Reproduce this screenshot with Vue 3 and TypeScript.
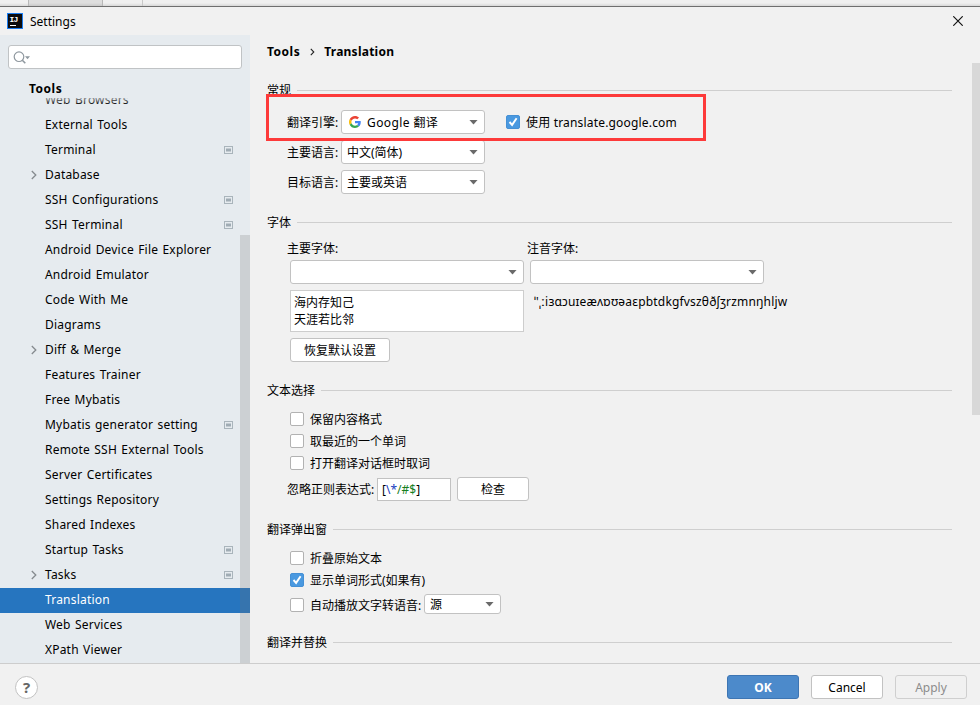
<script setup lang="ts">
interface TreeItem {
  label: string
  expandable?: boolean
  project?: boolean
  selected?: boolean
}

const items: TreeItem[] = [
  { label: 'Web Browsers' },
  { label: 'External Tools' },
  { label: 'Terminal', project: true },
  { label: 'Database', expandable: true },
  { label: 'SSH Configurations', project: true },
  { label: 'SSH Terminal', project: true },
  { label: 'Android Device File Explorer' },
  { label: 'Android Emulator' },
  { label: 'Code With Me' },
  { label: 'Diagrams' },
  { label: 'Diff & Merge', expandable: true },
  { label: 'Features Trainer' },
  { label: 'Free Mybatis' },
  { label: 'Mybatis generator setting', project: true },
  { label: 'Remote SSH External Tools' },
  { label: 'Server Certificates' },
  { label: 'Settings Repository' },
  { label: 'Shared Indexes' },
  { label: 'Startup Tasks', project: true },
  { label: 'Tasks', expandable: true, project: true },
  { label: 'Translation', selected: true },
  { label: 'Web Services' },
  { label: 'XPath Viewer' },
]

const selectionOptions: string[] = ['保留内容格式', '取最近的一个单词', '打开翻译对话框时取词']
</script>

<template>
  <div class="window">
    <div class="backdrop"><span class="tab"></span><span class="tab-gap"></span></div>
    <header class="titlebar">
      <svg class="app-icon" width="16" height="16" viewBox="0 0 16 16">
        <rect width="16" height="16" fill="#1a7cf0" />
        <rect x="1" y="1" width="14" height="14" fill="#0b0b0d" />
        <text x="2.6" y="9" class="app-mark" textLength="8.6">IJ</text>
        <path d="M3 12.500h6" stroke="#fff" stroke-width="1" />
      </svg>
      <span class="title">Settings</span>
      <svg class="close" width="10" height="10" viewBox="0 0 10 10">
        <path d="M.3 .3l9.400 9.400M9.700 .3L.3 9.700" stroke="#111" stroke-width="1.150" />
      </svg>
    </header>

    <div class="body">
      <aside class="sidebar">
        <div class="search">
          <svg width="18" height="14" viewBox="0 0 18 14">
            <circle cx="6" cy="5.700" r="4.800" fill="none" stroke="#8f989f" stroke-width="1.200" />
            <path d="M9.300 9.200l3 3" stroke="#8f989f" stroke-width="1.600" />
            <path d="M12 5.200h5l-2.500 3z" fill="#8f989f" />
          </svg>
        </div>
        <div class="group">Tools</div>
        <div class="tree">
          <div v-for="item in items" :key="item.label" class="node" :class="{ selected: item.selected }">
            <span class="arrow">
              <svg v-if="item.expandable" width="6" height="10" viewBox="0 0 6 10">
                <path d="M.8 1l4 4-4 4" fill="none" stroke="#858a8e" stroke-width="1.300" />
              </svg>
            </span>
            <span class="node-label">{{ item.label }}</span>
            <svg v-if="item.project" class="project" width="9" height="8" viewBox="0 0 9 8">
              <rect x=".5" y=".5" width="8" height="7" fill="none" stroke="#a9b4bb" />
              <rect x="2" y="2.500" width="5" height="3" fill="#a0acb4" />
            </svg>
          </div>
          <div class="tree-fade"></div>
          <div class="tree-scroll"></div>
        </div>
      </aside>

      <main class="content">
        <div class="crumbs">
          <span>Tools</span>
          <svg width="5" height="8" viewBox="0 0 5 8"><path d="M.8 .8L3.800 4 .8 7.200" fill="none" stroke="#222" stroke-width="1.100" /></svg>
          <span class="current">Translation</span>
        </div>

        <section class="general">
          <h2><span>常规</span></h2>
          <div class="field">
            <label>翻译引擎:</label>
            <div class="combo">
              <svg class="google" width="12" height="12" viewBox="0 0 48 48">
                <path fill="#ea4335" d="M24 9.500c3.500 0 6.700 1.200 9.200 3.600l6.900-6.900C35.900 2.400 30.500 0 24 0 14.600 0 6.500 5.400 2.600 13.200l8 6.200C12.400 13.700 17.700 9.500 24 9.500z" />
                <path fill="#4285f4" d="M47 24.600c0-1.600-.2-3.100-.4-4.600H24v9h12.900c-.6 3-2.200 5.500-4.700 7.200l7.700 6C44.400 38 47 31.900 47 24.600z" />
                <path fill="#fbbc05" d="M10.500 28.600c-.5-1.500-.8-3-.8-4.600s.3-3.100.8-4.600l-8-6.200C.9 16.500 0 20.100 0 24s.9 7.500 2.600 10.800z" />
                <path fill="#34a853" d="M24 48c6.500 0 11.900-2.100 15.900-5.800l-7.700-6c-2.200 1.500-4.900 2.300-8.200 2.300-6.300 0-11.600-4.200-13.500-9.900l-7.900 6.200C6.500 42.600 14.600 48 24 48z" />
              </svg>
              <span class="engine">Google 翻译</span><i class="caret"></i>
            </div>
            <div class="check engine-check">
              <span class="box on"><svg width="12" height="12" viewBox="0 0 12 12"><path d="M2.500 6l2.600 2.900 4.500-6.700" /></svg></span>
              <span class="host">使用 translate.google.com</span>
            </div>
          </div>
          <div class="field"><label>主要语言:</label><div class="combo"><span>中文(简体)</span><i class="caret"></i></div></div>
          <div class="field"><label>目标语言:</label><div class="combo"><span>主要或英语</span><i class="caret"></i></div></div>
          <div class="highlight"></div>
        </section>

        <section>
          <h2><span>字体</span></h2>
          <div class="fonts">
            <div class="font-col">
              <div class="font-label">主要字体:</div>
              <div class="combo wide"><i class="caret"></i></div>
              <div class="preview">海内存知己<br />天涯若比邻</div>
              <button class="btn reset">恢复默认设置</button>
            </div>
            <div class="font-col">
              <div class="font-label">注音字体:</div>
              <div class="combo wide"><i class="caret"></i></div>
              <div class="phonetic">ˈ'ˌːiɜɑɔuɪeæʌɒʊəaɛpbtdkgfvszθðʃʒrzmnŋhljw</div>
            </div>
          </div>
        </section>

        <section>
          <h2><span>文本选择</span></h2>
          <div class="checks">
            <div v-for="option in selectionOptions" :key="option" class="check">
              <span class="box"></span><span class="caption">{{ option }}</span>
            </div>
          </div>
          <div class="regex">
            <label>忽略正则表达式:</label>
            <div class="input">[<span class="esc">\*</span><span class="lit">/#$</span>]</div>
            <button class="btn verify">检查</button>
          </div>
        </section>

        <section>
          <h2><span>翻译弹出窗</span></h2>
          <div class="checks">
            <div class="check"><span class="box"></span><span class="caption">折叠原始文本</span></div>
            <div class="check">
              <span class="box on"><svg width="12" height="12" viewBox="0 0 12 12"><path d="M2.500 6l2.600 2.900 4.500-6.700" /></svg></span>
              <span class="caption">显示单词形式(如果有)</span>
            </div>
          </div>
          <div class="tts">
            <div class="check"><span class="box"></span><span>自动播放文字转语音:</span></div>
            <div class="combo small"><span>源</span><i class="caret"></i></div>
          </div>
        </section>

        <section>
          <h2><span>翻译并替换</span></h2>
        </section>
        <div class="page-scroll"></div>
      </main>
    </div>

    <footer>
      <div class="help">?</div>
      <div class="actions">
        <button class="btn primary">OK</button>
        <button class="btn">Cancel</button>
        <button class="btn disabled">Apply</button>
      </div>
    </footer>
  </div>
</template>

<style>
body {
  margin: 0;
  overflow: hidden;
}
</style>

<style scoped>
* {
  box-sizing: border-box;
}
.window {
  display: flex;
  flex-direction: column;
  width: 980px;
  height: 705px;
  background: #f1f1f1;
  color: #000;
  font: 12px/16px "Noto Sans", "Noto Sans CJK SC", sans-serif;
  white-space: nowrap;
  overflow: hidden;
}
.backdrop {
  display: flex;
  flex: none;
  height: 7px;
  padding-left: 28px;
  background: linear-gradient(#f0f0f0 0 3px, #d8d8d8 6px, #6f6f6f 6px);
}
.tab {
  width: 75px;
  height: 6px;
  background: linear-gradient(#dedede 0 3px, #c8c8c8);
  border: solid #b8b8b8;
  border-width: 0 1px;
}
.tab-gap {
  width: 40px;
  height: 6px;
  border-right: 1px solid #c9c9c9;
}
.titlebar {
  display: flex;
  flex: none;
  align-items: center;
  height: 28px;
  padding: 0 17px 0 7px;
}
.app-mark {
  fill: #fff;
  font: 700 8px "Liberation Mono", monospace;
}
.title {
  flex: 1;
  margin: 1px 0 0 7px;
}
.body {
  display: flex;
  flex: none;
  height: 628px;
}
.sidebar {
  display: flex;
  flex-direction: column;
  width: 250px;
  padding-top: 10px;
  background: #e6ebef;
}
.search {
  display: flex;
  align-items: center;
  flex: none;
  height: 24px;
  margin: 0 8px;
  padding: 1px 0 0 4px;
  background: #fff;
  border: 1px solid #c0c3c5;
  border-radius: 3px;
}
.group {
  flex: none;
  height: 29px;
  padding: 12px 0 0 29px;
  font-weight: 700;
  letter-spacing: 0.5px;
}
.tree {
  position: relative;
  flex: 1;
  overflow: hidden;
}
.node {
  display: flex;
  align-items: center;
  height: 25px;
  padding: 0 17px 2px 31px;
}
.node:first-child {
  margin-top: -10px;
}
.node.selected {
  background: #2675bf;
  color: #fff;
}
.arrow {
  display: flex;
  width: 14px;
}
.node-label {
  flex: 1;
  letter-spacing: 0.2px;
  word-spacing: 1px;
}
.tree-fade {
  position: absolute;
  top: 0;
  left: 0;
  width: 240px;
  height: 7px;
  background: linear-gradient(rgba(230, 235, 239, 0.6), rgba(230, 235, 239, 0));
}
.tree-scroll {
  position: absolute;
  top: 137px;
  right: 0;
  bottom: 0;
  width: 10px;
  background: rgba(115, 115, 115, 0.22);
}
.content {
  position: relative;
  flex: 1;
  padding: 8px 28px 0 17px;
}
.crumbs {
  display: flex;
  align-items: center;
  gap: 9px;
  height: 17px;
  margin-bottom: 20px;
  font-weight: 700;
  letter-spacing: 0.5px;
}
.crumbs svg {
  margin-left: 1px;
}
.current {
  letter-spacing: 0.25px;
}
section {
  display: flow-root;
  margin-bottom: 18px;
}
h2 {
  display: flex;
  align-items: center;
  gap: 6px;
  height: 20px;
  margin: 0;
  font-size: 12px;
  font-weight: 400;
}
h2 span,
label,
.combo span,
.check > span:last-child {
  padding-top: 2px;
}
h2::after {
  flex: 1;
  height: 1px;
  background: #cfcfcf;
  content: "";
}
.general {
  position: relative;
}
.field {
  display: flex;
  align-items: center;
  height: 24px;
  margin-bottom: 6px;
  padding-left: 20px;
}
h2 + .field {
  margin-top: 10px;
}
.general .field:nth-last-child(2) {
  margin-bottom: 0;
}
.field label {
  width: 54px;
}
.combo {
  display: flex;
  align-items: center;
  width: 144px;
  height: 24px;
  padding: 0 6px 0 5px;
  background: #fff;
  border: 1px solid #c2c2c2;
  border-radius: 3px;
}
.google {
  margin: 0 6px 0 2px;
}
.engine {
  letter-spacing: 0.4px;
}
.host {
  letter-spacing: 0.18px;
}
.caret {
  width: 9px;
  height: 5px;
  margin-left: auto;
  background: #6a6a6a;
  clip-path: polygon(0 0, 100% 0, 50% 100%);
}
.check {
  display: flex;
  align-items: center;
  gap: 6px;
  height: 22px;
}
.engine-check {
  margin-left: 21px;
}
.box {
  display: grid;
  place-items: center;
  width: 14px;
  height: 14px;
  background: #fff;
  border: 1px solid #b2b2b2;
  border-radius: 2px;
}
.box.on {
  background: #4a99e0;
  border-color: #4590d5;
}
.box path {
  fill: none;
  stroke: #fff;
  stroke-width: 1.9;
}
.highlight {
  position: absolute;
  top: 14px;
  left: -1px;
  width: 440px;
  height: 47px;
  border: 3px solid #fd3a3a;
}
.fonts {
  display: flex;
  gap: 6px;
  padding: 6px 0 0 23px;
}
.font-col {
  width: 234px;
}
.font-label {
  height: 22px;
  margin-left: -3px;
  padding-top: 3px;
}
.combo.wide {
  width: 234px;
}
.preview {
  height: 42px;
  margin: 6px 0;
  padding: 3px;
  background: #fff;
  border: 1px solid #cdcdcd;
  line-height: 17px;
}
.phonetic {
  padding: 10px 0 0 4px;
  letter-spacing: 0.18px;
}
.btn {
  width: 72px;
  height: 24px;
  padding: 0;
  background: #fff;
  border: 1px solid #c2c2c2;
  border-radius: 3px;
  color: #000;
  font: inherit;
}
.reset {
  display: block;
  width: 100px;
}
.reset,
.verify {
  padding-top: 2px;
}
.checks {
  padding: 8px 0 0 23px;
}
.regex {
  display: flex;
  align-items: center;
  margin-top: 3px;
  padding-left: 20px;
}
.regex label {
  width: 90px;
}
.input {
  width: 74px;
  height: 23px;
  margin-right: 6px;
  padding: 3px 4px;
  background: #fff;
  border: 1px solid #c2c2c2;
}
.esc {
  color: #1740c0;
}
.lit {
  color: #16801f;
}
.tts {
  display: flex;
  align-items: center;
  height: 20px;
  margin-top: 3px;
  padding-left: 23px;
}
.tts .check {
  width: 134px;
  padding-top: 2px;
}
.tts .check > span:last-child {
  padding-top: 1px;
}
.combo.small {
  width: 77px;
  height: 20px;
}
.page-scroll {
  position: absolute;
  top: 28px;
  right: 0;
  width: 8px;
  height: 352px;
  background: #d8d8d8;
}
footer {
  display: flex;
  flex: 1;
  align-items: center;
  justify-content: space-between;
  padding: 6px 13px 0 15px;
  border-top: 1px solid #cdcdcd;
}
.help {
  width: 23px;
  height: 23px;
  background: #fff;
  border: 1px solid #c2c2c2;
  border-radius: 50%;
  color: #666;
  font-size: 15px;
  font-weight: 700;
  line-height: 21px;
  text-align: center;
}
.actions {
  display: flex;
  gap: 12px;
  margin-bottom: 1px;
}
.actions .btn {
  padding-top: 1px;
}
.primary {
  background: #4c8acb;
  border-color: #3d75b3;
  color: #fff;
  font-weight: 700;
}
.disabled {
  background: transparent;
  border-color: #cfcfcf;
  color: #8c8c8c;
}
</style>
